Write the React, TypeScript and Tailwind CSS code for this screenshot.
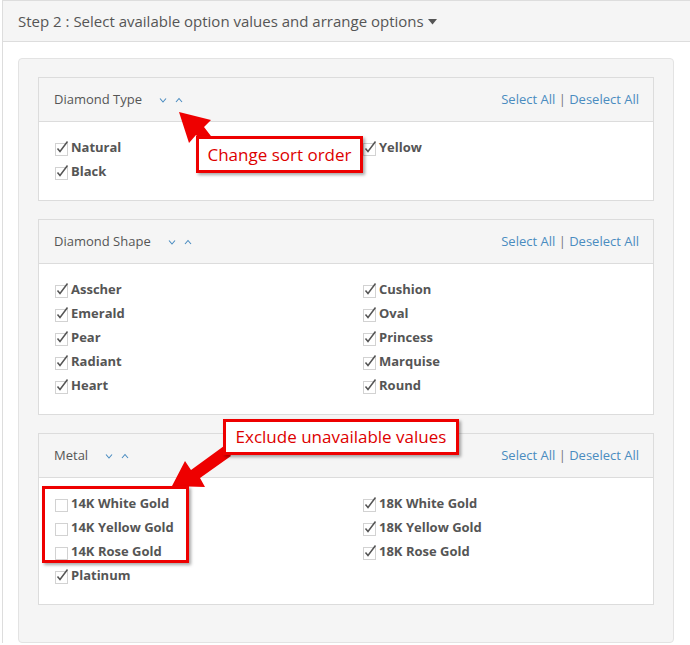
import React from 'react';

interface OptionGroup {
  title: string;
  left: { label: string; checked: boolean }[];
  right: { label: string; checked: boolean }[];
}

const groups: OptionGroup[] = [
  {
    title: 'Diamond Type',
    left: [
      { label: 'Natural', checked: true },
      { label: 'Black', checked: true },
    ],
    right: [{ label: 'Yellow', checked: true }],
  },
  {
    title: 'Diamond Shape',
    left: ['Asscher', 'Emerald', 'Pear', 'Radiant', 'Heart'].map((label) => ({ label, checked: true })),
    right: ['Cushion', 'Oval', 'Princess', 'Marquise', 'Round'].map((label) => ({ label, checked: true })),
  },
  {
    title: 'Metal',
    left: [
      { label: '14K White Gold', checked: false },
      { label: '14K Yellow Gold', checked: false },
      { label: '14K Rose Gold', checked: false },
      { label: 'Platinum', checked: true },
    ],
    right: [
      { label: '18K White Gold', checked: true },
      { label: '18K Yellow Gold', checked: true },
      { label: '18K Rose Gold', checked: true },
    ],
  },
];

const CheckBox: React.FC<{ checked: boolean }> = ({ checked }) => (
  <svg width="16" height="16" viewBox="0 0 16 16" className="shrink-0">
    <rect x="0.5" y="3.5" width="12" height="12" fill="#fff" stroke="#d2d2d2" />
    {checked && (
      <path d="M2.5 8.5 L5 11.5 L12.5 1.5" fill="none" stroke="#555" strokeWidth="1.5" />
    )}
  </svg>
);

const Chevron: React.FC<{ up?: boolean }> = ({ up }) => (
  <svg width="8" height="6" viewBox="0 0 8 6">
    <path
      d={up ? 'M1 5 L4 1.5 L7 5' : 'M1 1.5 L4 5 L7 1.5'}
      fill="none"
      stroke="#4a8cc0"
      strokeWidth="1.1"
    />
  </svg>
);

const Item: React.FC<{ label: string; checked: boolean }> = ({ label, checked }) => (
  <div className="h-[24px] flex items-center text-[13px] font-bold text-[#555]">
    <CheckBox checked={checked} />
    <span className="-mt-[1px]">{label}</span>
  </div>
);

const GroupCard: React.FC<{ group: OptionGroup }> = ({ group }) => (
  <div className="border border-[#dcdcdc] bg-white mb-[18px]">
    <div className="h-[44px] bg-[#f5f5f5] border-b border-[#dcdcdc] flex items-center justify-between pl-[15px] pr-[14px] text-[13px]">
      <div className="flex items-center text-[#555]">
        <span>{group.title}</span>
        <span className="ml-[17px] flex items-center gap-[8px] pt-[1px]">
          <Chevron />
          <Chevron up />
        </span>
      </div>
      <div className="text-[#4a8cc0]">
        Select All <span className="text-[#777]">|</span> Deselect All
      </div>
    </div>
    <div className="pt-[14px] pb-[16px] pl-[16px] grid grid-cols-[308px_1fr]">
      <div>
        {group.left.map((it) => (
          <Item key={it.label} {...it} />
        ))}
      </div>
      <div>
        {group.right.map((it) => (
          <Item key={it.label} {...it} />
        ))}
      </div>
    </div>
  </div>
);

const App: React.FC = () => {
  return (
    <div className="relative w-[690px] h-[645px] overflow-hidden bg-white font-['Open_Sans',sans-serif]">
      <div className="ml-[2px] w-[720px] border-l border-t border-[#dddddd]">
        <div className="h-[41px] bg-[#f5f5f5] border-b border-[#dddddd] pl-[15px] flex items-center text-[15px] text-[#555]">
          <span>Step 2 : Select available option values and arrange options</span>
          <svg width="9" height="6" viewBox="0 0 9 6" className="ml-[4px] mt-[1px]">
            <path d="M0 0 H9 L4.5 5.5 Z" fill="#555" />
          </svg>
        </div>
        <div className="ml-[15px] mt-[16px] w-[656px] bg-[#f5f5f5] border border-[#e3e3e3] rounded-[4px] pt-[18px] px-[19px] pb-[19px]">
          {groups.map((g) => (
            <GroupCard key={g.title} group={g} />
          ))}
        </div>
      </div>

      {/* annotations */}
      <svg className="absolute left-0 top-0 pointer-events-none" width="690" height="645">
        <polygon
          points="179,112 211,120 204,127 214,140 200,140 196,135 189,143"
          fill="#ee0000"
        />
        <polygon
          points="172,486 185,461 191,470 224,446 231,456 200,478 205,487"
          fill="#ee0000"
        />
      </svg>
      <div className="absolute left-[196px] top-[136px] w-[167px] h-[37px] border-[3px] border-[#ee0000] bg-white shadow-[2px_2px_3px_rgba(0,0,0,0.35)] flex items-center justify-center text-[17px] text-[#dd0000]">
        Change sort order
      </div>
      <div className="absolute left-[223px] top-[419px] w-[236px] h-[36px] border-[3px] border-[#ee0000] bg-white shadow-[2px_2px_3px_rgba(0,0,0,0.35)] flex items-center justify-center text-[17px] text-[#dd0000]">
        Exclude unavailable values
      </div>
      <div className="absolute left-[42px] top-[486px] w-[147px] h-[77px] border-[3px] border-[#ee0000] shadow-[2px_2px_3px_rgba(0,0,0,0.35)]" />
    </div>
  );
};

export default App;
